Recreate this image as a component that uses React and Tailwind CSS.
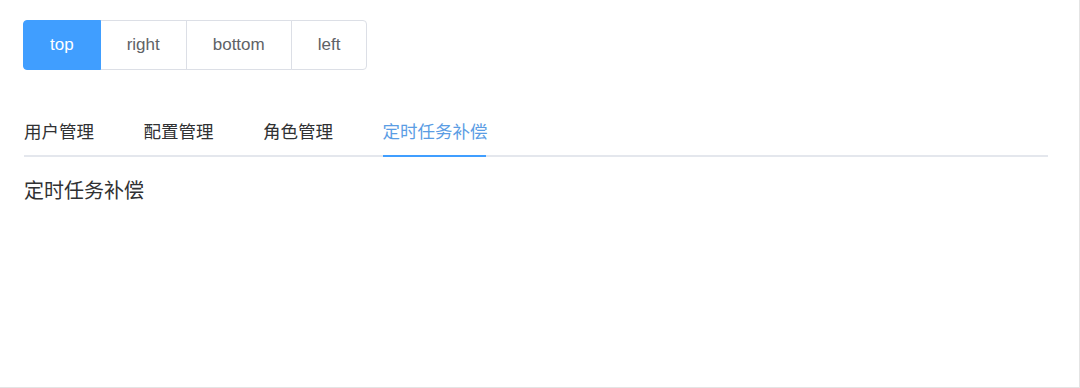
import { useState } from 'react';

const positions = ['top', 'right', 'bottom', 'left'];
const tabs = ['用户管理', '配置管理', '角色管理', '定时任务补偿'];

export default function App() {
  const [pos, setPos] = useState('top');
  const [active, setActive] = useState('定时任务补偿');

  return (
    <div
      className="w-[1080px] h-[388px] bg-white border-r border-b border-[#e4e4e4] overflow-hidden"
      style={{ fontFamily: '"Liberation Sans", Arial, "Noto Sans CJK SC", sans-serif' }}
    >
      <div className="pl-[23px] pt-[20px]">
        <div className="inline-flex">
          {positions.map((p, i) => {
            const isActive = pos === p;
            return (
              <button
                key={p}
                onClick={() => setPos(p)}
                className={`h-[50px] px-[26px] text-[17px] border ${i > 0 ? '-ml-px' : ''} ${
                  i === 0 ? 'rounded-l-[4px]' : ''
                } ${i === positions.length - 1 ? 'rounded-r-[4px]' : ''} ${
                  isActive
                    ? 'bg-[#409eff] border-[#409eff] text-white relative z-10'
                    : 'bg-white border-[#dcdfe6] text-[#606266]'
                }`}
              >
                {p}
              </button>
            );
          })}
        </div>
      </div>

      <div className="mt-[37px] ml-[24px] w-[1024px]">
        <div className="flex gap-[49.5px] border-b-2 border-[#e4e7ed] h-[50px]">
          {tabs.map((t) => {
            const isActive = active === t;
            return (
              <button
                key={t}
                onClick={() => setActive(t)}
                className={`relative h-full text-[17.5px] leading-[46px] pb-[1px] ${
                  isActive ? 'text-[#5b9de4]' : 'text-[#303133]'
                }`}
                style={{ fontFamily: '"Noto Sans CJK SC", sans-serif' }}
              >
                {t}
                {isActive && <span className="absolute left-0 right-[2px] -bottom-[2px] h-[2px] bg-[#409eff]" />}
              </button>
            );
          })}
        </div>
        <div
          className="mt-[19px] text-[20px] text-[#303133] leading-[28px]"
          style={{ fontFamily: '"Noto Sans CJK SC", sans-serif' }}
        >
          {active}
        </div>
      </div>
    </div>
  );
}
